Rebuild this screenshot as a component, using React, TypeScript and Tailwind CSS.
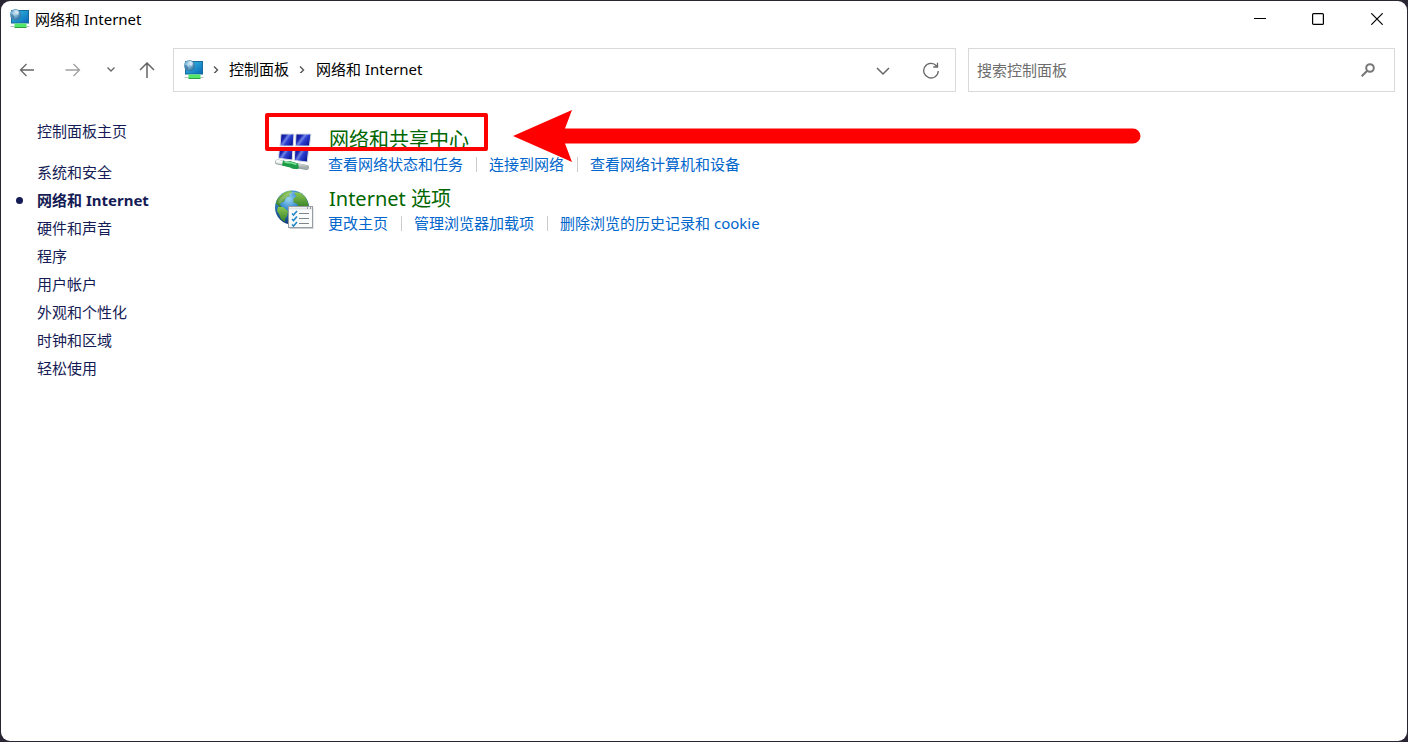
import React, { useState } from "react";

type Task = { title: string; icon: React.ReactNode; links: string[] };

const categories = [
  "系统和安全",
  "网络和 Internet",
  "硬件和声音",
  "程序",
  "用户帐户",
  "外观和个性化",
  "时钟和区域",
  "轻松使用",
];

const NetworkIcon: React.FC = () => (
  <svg width="20" height="20" viewBox="0 0 20 20" aria-hidden="true">
    <defs>
      <linearGradient id="screen" x1="0" y1="0" x2="1" y2="1">
        <stop offset="0" stopColor="#35c3e6" />
        <stop offset="1" stopColor="#0a67b8" />
      </linearGradient>
      <radialGradient id="ball" cx="0.4" cy="0.4" r="0.65">
        <stop offset="0" stopColor="#c4e2f2" />
        <stop offset="0.5" stopColor="#6fa9cd" />
        <stop offset="1" stopColor="#2d6b99" />
      </radialGradient>
    </defs>
    <rect x="1.5" y="1.5" width="17" height="12.5" fill="url(#screen)" stroke="#176a9c" />
    <path d="M0.5 17.5h19" stroke="#b9c1c4" />
    <rect x="4.5" y="14.5" width="12" height="3.5" fill="#53e768" />
    <path d="M4.5 18.5h12" stroke="#2f9e43" />
    <circle cx="5.5" cy="5.5" r="5.5" fill="url(#ball)" />
    <path d="M4 1.500l3-.5 2 2-1 3-2-1z" fill="#e2f0f6" opacity="0.8" />
    <path d="M1 5l2 .5 1.500 2.500-1 2-2-2z" fill="#2d6b99" opacity="0.6" />
  </svg>
);

const SharingIcon: React.FC = () => (
  <svg width="40" height="40" viewBox="0 0 40 40" aria-hidden="true">
    <defs>
      <linearGradient id="pane" x1="0" y1="0" x2="1" y2="0.6">
        <stop offset="0" stopColor="#050a7c" />
        <stop offset="0.35" stopColor="#1a27b4" />
        <stop offset="0.5" stopColor="#6f83e4" />
        <stop offset="0.65" stopColor="#2a3fd0" />
        <stop offset="1" stopColor="#0d1a9a" />
      </linearGradient>
      <linearGradient id="pipe" x1="0" y1="0" x2="0" y2="1">
        <stop offset="0" stopColor="#f8faf9" />
        <stop offset="1" stopColor="#a3adab" />
      </linearGradient>
    </defs>
    <g fill="url(#pane)" stroke="#d8dbe3">
      <path d="M7 3h13l-.8 12h-13.200z" />
      <path d="M22 3h15l-1.600 12h-14z" />
      <path d="M5.500 16.500h13.500l-.8 12.500-13.700-1.800z" />
      <path d="M21 16.500h13.800l-1.500 14.500-13-1.600z" />
    </g>
    <path d="M3.500 31l29 5.500" stroke="#93a09e" strokeWidth="5" strokeLinecap="round" />
    <path d="M3.500 30.700l29 5.500" stroke="url(#pipe)" strokeWidth="3.800" strokeLinecap="round" />
    <path d="M9 29.500q3 2 7 .5l8 2.500 1 5q-5 1.500-9-1l-8-2z" fill="#1c9a45" />
    <path d="M10.500 31q4 1 6 .5l6 2" stroke="#7fe39a" strokeWidth="1.500" fill="none" />
  </svg>
);

const OptionsIcon: React.FC = () => (
  <svg width="40" height="40" viewBox="0 0 40 40" aria-hidden="true">
    <defs>
      <radialGradient id="sea" cx="0.4" cy="0.25" r="0.8">
        <stop offset="0" stopColor="#9bd6f2" />
        <stop offset="0.4" stopColor="#2f86cb" />
        <stop offset="1" stopColor="#0b2c69" />
      </radialGradient>
      <linearGradient id="land" x1="0" y1="0" x2="0" y2="1">
        <stop offset="0" stopColor="#8bc653" />
        <stop offset="1" stopColor="#357f25" />
      </linearGradient>
    </defs>
    <circle cx="18" cy="17.500" r="17" fill="url(#sea)" />
    <path d="M6 6l5-4 6-1.500 1 2-3 1.500 1 2-4 1.500-2 4-3 1-1 3 3 2-3 0-4-4 1-4z" fill="url(#land)" />
    <path d="M4 17l5 0 5 4-1 5-2 3 0 3-4-3-2-5-2-3z" fill="url(#land)" />
    <path d="M20 2.500l6 0 5 4 3 6 .5 4-9 1-3-4-3-1 0-4 3-2z" fill="url(#land)" />
    <path d="M4 12C8 4 16 1 24 2c-5 1-13 5-18 12z" fill="#ffffff" opacity="0.2" />
    <rect x="15.500" y="17.500" width="24" height="21.500" fill="#8e979c" opacity="0.45" />
    <rect x="14.500" y="16.500" width="24" height="21" fill="#fafbfb" stroke="#979da0" />
    <path d="M15 18.500h23" stroke="#dfe3e5" strokeWidth="2" />
    <path d="M33 18h1M36 18h1" stroke="#555" />
    <path
      d="M18 23.500l1.500 1.500 3.500-4M18 29l1.500 1.500 3.500-4M18 34.500l1.500 1.500 3.500-4"
      stroke="#2288cc"
      strokeWidth="1.600"
      fill="none"
    />
    <path d="M25 23.500h10M25 28.500h10M25 33.500h10" stroke="#7c858a" />
  </svg>
);

const tasks: Task[] = [
  {
    title: "网络和共享中心",
    icon: <SharingIcon />,
    links: ["查看网络状态和任务", "连接到网络", "查看网络计算机和设备"],
  },
  {
    title: "Internet 选项",
    icon: <OptionsIcon />,
    links: ["更改主页", "管理浏览器加载项", "删除浏览的历史记录和 cookie"],
  },
];

const Stroke: React.FC<{ d: string; size: number; width?: number }> = ({ d, size, width = 1.3 }) => (
  <svg
    width={size}
    height={size}
    viewBox={`0 0 ${size} ${size}`}
    fill="none"
    stroke="currentColor"
    strokeWidth={width}
    aria-hidden="true"
  >
    <path d={d} />
  </svg>
);

const TitleBar: React.FC = () => (
  <header className="flex h-9 items-center justify-between pl-[9px]">
    <div className="flex items-center gap-[5px]">
      <NetworkIcon />
      <h1>网络和 Internet</h1>
    </div>
    <div className="flex">
      <button aria-label="最小化" className="flex h-9 w-[58px] items-center justify-center">
        <Stroke size={12} width={1} d="M0 5.5h12" />
      </button>
      <button aria-label="最大化" className="flex h-9 w-[58px] items-center justify-center">
        <svg width="12" height="12" viewBox="0 0 12 12" fill="none" stroke="currentColor" strokeWidth="1.2">
          <rect x="0.6" y="0.6" width="10.8" height="10.8" rx="1" />
        </svg>
      </button>
      <button aria-label="关闭" className="flex h-9 w-[60px] items-center justify-center">
        <Stroke size={12} width={1.2} d="M0.3 0.3l11.4 11.4M11.7 0.3L0.3 11.7" />
      </button>
    </div>
  </header>
);

const NavBar: React.FC = () => {
  const [query, setQuery] = useState("");

  return (
    <div className="flex items-center pt-[11px] pr-3">
      <nav className="flex w-[172px] shrink-0 items-center pl-[18px] text-[#666666]">
        <button aria-label="后退" className="w-4">
          <Stroke size={16} d="M15 8H1.500M7.500 2l-6 6 6 6" />
        </button>
        <button aria-label="前进" className="ml-[30px] w-4 text-[#a0a0a0]">
          <Stroke size={16} d="M0.500 8h14M8.500 2l6 6-6 6" />
        </button>
        <button aria-label="最近浏览的位置" className="ml-[26px] w-2">
          <Stroke size={8} d="M0.500 1.500L4 5l3.500-3.500" />
        </button>
        <button aria-label="上移" className="ml-6 w-4">
          <Stroke size={16} width={1.5} d="M8 16V1M1 8l7-7 7 7" />
        </button>
      </nav>
      <div className="grid flex-1 grid-cols-[11fr_6fr] gap-3">
        <div className="flex h-11 items-center border border-[#d9d9d9] pl-[10px]">
          <NetworkIcon />
          <div className="flex items-center pb-0.5">
            <span className="ml-2 text-[#555555]">
              <Stroke size={8} width={1.4} d="M2 1.500L5.500 5 2 8.500" />
            </span>
            <a href="#home" className="ml-[9px]">控制面板</a>
            <span className="ml-[9px] text-[#555555]">
              <Stroke size={8} width={1.4} d="M2 1.500L5.500 5 2 8.500" />
            </span>
            <a href="#network" className="ml-[10px]">网络和 Internet</a>
          </div>
          <div className="ml-auto flex items-center text-[#666666]">
            <button aria-label="以前的位置" className="flex h-10 w-12 items-center justify-center">
              <Stroke size={14} width={1.5} d="M1 5l6 6 6-6" />
            </button>
            <button aria-label="刷新" className="flex h-10 w-12 items-center justify-center">
              <Stroke size={18} d="M14.600 5A7.300 7.300 0 1 0 16.300 10M15.500 1.800V6H11.300" />
            </button>
          </div>
        </div>
        <div className="flex h-11 items-center border border-[#d9d9d9] pr-[19px] pl-2">
          <input
            type="text"
            aria-label="搜索控制面板"
            placeholder="搜索控制面板"
            value={query}
            onChange={(e) => setQuery(e.target.value)}
            className="min-w-0 flex-1 outline-none placeholder:text-[#6d6d6d]"
          />
          <svg width="14" height="14" viewBox="0 0 14 14" fill="none" stroke="#777777" strokeWidth="2">
            <circle cx="9" cy="5" r="3.800" />
            <path d="M6.200 7.800L0.700 13.300" />
          </svg>
        </div>
      </div>
    </div>
  );
};

const Sidebar: React.FC = () => {
  const [current, setCurrent] = useState(1);

  return (
    <aside className="w-[272px] shrink-0 pt-[25px] pl-9 text-[#151c55]">
      <a href="#home" className="block h-7 leading-7">控制面板主页</a>
      <ul className="mt-[13px]">
        {categories.map((name, index) => (
          <li key={name} className="relative h-7 leading-7">
            {index === current && (
              <span className="absolute top-[11px] -left-[21px] size-[7px] rounded-full bg-[#151c55]" />
            )}
            <a href="#category" onClick={() => setCurrent(index)} className={index === current ? "font-bold" : ""}>
              {name}
            </a>
          </li>
        ))}
      </ul>
    </aside>
  );
};

// Red frame and arrow drawn over the first task
const Callout: React.FC = () => (
  <div className="pointer-events-none absolute top-[21px] left-[-8px] flex">
    <div className="h-[38px] w-[223px] rounded-[2px] border-4 border-[#ff0000]" />
    <svg className="-mt-1 ml-[25px]" width="628" height="54" viewBox="0 0 628 54" aria-hidden="true">
      <path d="M0 27L59 1l-7 18.500h568a7.500 7.500 0 0 1 0 15H52L59 53z" fill="#ff0000" />
    </svg>
  </div>
);

const App: React.FC = () => {
  return (
    <div className="flex min-h-screen bg-[#2a2533] p-px font-['Noto_Sans','Noto_Sans_CJK_SC',sans-serif] text-[15px] leading-5 text-black">
      <div className="flex flex-1 flex-col rounded-[9px] bg-white">
        <TitleBar />
        <NavBar />
        <div className="flex flex-1">
          <Sidebar />
          <main className="relative flex-1 pt-9">
            {tasks.map((task) => (
              <section key={task.title} className="mb-[11px] flex h-12">
                <div className="mt-[3px] w-14 shrink-0 pl-px">{task.icon}</div>
                <div>
                  <h2 className="text-[20px] leading-6 text-[#006600]">
                    <a href="#task">{task.title}</a>
                  </h2>
                  <ul className="-ml-px mt-0.5 flex items-center text-[#0066cc]">
                    {task.links.map((link, index) => (
                      <li key={link} className="flex items-center">
                        {index > 0 && <span className="mr-3 ml-[13px] h-[15px] w-px bg-[#cccccc]" />}
                        <a href="#link">{link}</a>
                      </li>
                    ))}
                  </ul>
                </div>
              </section>
            ))}
            <Callout />
          </main>
        </div>
      </div>
    </div>
  );
};

export default App;
